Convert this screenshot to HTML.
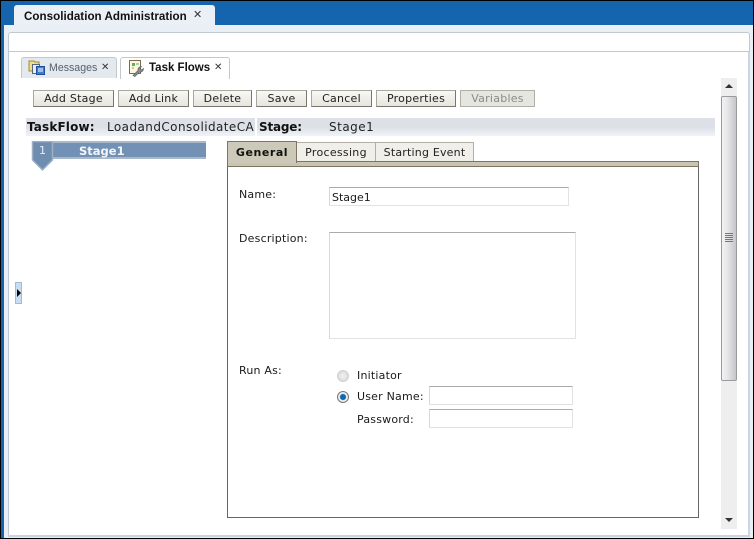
<!DOCTYPE html>
<html><head><meta charset="utf-8">
<style>
html,body{margin:0;padding:0;background:#fff}
#p{position:relative;width:754px;height:539px;overflow:hidden;background:#fff;font-family:"DejaVu Sans","Liberation Sans",sans-serif;font-size:11px;color:#1a1a1a}
#p div,#p svg{position:absolute;box-sizing:border-box}
.t{white-space:nowrap;line-height:14px;letter-spacing:.2px}
.b{height:17px;top:90px;background:linear-gradient(#f8f8f4,#e6e5de);border:1px solid #a8a89e;border-right-color:#77776f;border-bottom-color:#77776f;text-align:center;line-height:15px;white-space:nowrap;color:#222;letter-spacing:.25px}
.i{background:#fff;border:1px solid #e2e2e2;border-top-color:#aaa;border-left-color:#d8d8d8}
</style></head><body>
<div id="p">
<div style="left:0;top:0;width:754px;height:539px;background:#e9eff5"></div>
<div style="left:0;top:1px;width:754px;height:24px;background:#1565ae"></div>
<div style="left:1px;top:1px;width:3px;height:537px;background:#1565ae"></div>
<div style="left:14px;top:5px;width:201px;height:20px;background:#eaf0f5;border-radius:3px 3px 0 0"></div>
<div class="t" style="left:24px;top:10px;font:bold 11.6px/14px 'Liberation Sans',sans-serif;color:#111;letter-spacing:.03px">Consolidation Administration</div>
<div class="t" style="left:193px;top:8px;font-size:11px;color:#333">✕</div>

<div style="left:8px;top:32px;width:742px;height:504px;background:#fff;border:1px solid #c0c8d0;border-radius:3px 3px 0 0"></div>
<div style="left:9px;top:51px;width:740px;height:1px;background:#c0c8d0"></div>
<div style="left:748px;top:52px;width:2px;height:484px;background:#ccd5e6"></div>
<div style="left:8px;top:535px;width:742px;height:2px;background:#c8d4e4"></div>

<!-- inner tabs -->
<div style="left:21px;top:57px;width:96px;height:21px;background:#e4e9ee;border:1px solid #c0c8d0;border-bottom:0;border-radius:3px 3px 0 0"></div>
<svg style="left:28px;top:59px" width="18" height="17" viewBox="0 0 18 17"><path d="M1 2h5l1 1h4v9H1z" fill="#f2dc86" stroke="#9a8a40"/><rect x="4.500" y="5.500" width="7" height="9" fill="#e8edf5" stroke="#55657a"/><rect x="8.500" y="7.500" width="8" height="8" fill="#3f7fd0" stroke="#1f4f9a"/><path d="M10 10h5M10 12h5" stroke="#fff"/></svg>
<div class="t" style="left:49px;top:61px;font:10.6px/14px 'Liberation Sans',sans-serif;color:#555f70;letter-spacing:0">Messages</div>
<div class="t" style="left:101px;top:61px;font-size:10px;color:#333">✕</div>

<div style="left:120px;top:57px;width:110px;height:22px;background:#fff;border:1px solid #c0c8d0;border-bottom:0;border-radius:3px 3px 0 0"></div>
<svg style="left:128px;top:59px" width="17" height="18" viewBox="0 0 17 18"><rect x="1.500" y="1.500" width="11" height="13" fill="#fdf6e0" stroke="#7a6a50"/><path d="M4 4h3v3H4z" fill="#5fb05f"/><path d="M8 5h3" stroke="#5fb05f"/><path d="M4 9h2" stroke="#d08040"/><path d="M5 16.500L10 11.500C9.500 9.500 11 7.500 13.500 7.500L12 9.500 13.500 11 15.500 9.500C15.500 12 13.500 13.500 11.500 13L7 17.500Z" fill="#8a8f98" stroke="#555" stroke-width=".6"/></svg>
<div class="t" style="left:149px;top:61px;font:bold 11.500px/14px 'Liberation Sans',sans-serif;color:#111;letter-spacing:0">Task Flows</div>
<div class="t" style="left:214px;top:61px;font-size:10px;color:#333">✕</div>

<!-- toolbar -->
<div class="b" style="left:33px;width:81px">Add Stage</div>
<div class="b" style="left:118px;width:71px">Add Link</div>
<div class="b" style="left:193px;width:59px">Delete</div>
<div class="b" style="left:256px;width:51px">Save</div>
<div class="b" style="left:311px;width:61px">Cancel</div>
<div class="b" style="left:376px;width:80px">Properties</div>
<div class="b" style="left:460px;width:75px;background:#e6e6e0;border-color:#b0b0a8;color:#8a8a88">Variables</div>

<!-- header bar -->
<div style="left:26px;top:118px;width:229px;height:18px;background:linear-gradient(#dde1e7 0,#dde1e7 50%,#f0f3f6 100%)"></div>
<div style="left:257px;top:118px;width:458px;height:18px;background:linear-gradient(#dde1e7 0,#dde1e7 50%,#f0f3f6 100%)"></div>
<div class="t" style="left:27px;top:120px;font-size:12px;font-weight:bold;color:#111;letter-spacing:.15px">TaskFlow:</div>
<div class="t" style="left:107px;top:120px;font-size:12px;color:#222;letter-spacing:.43px">LoadandConsolidateCA</div>
<div class="t" style="left:259px;top:120px;font-size:12px;font-weight:bold;color:#111;letter-spacing:-.2px">Stage:</div>
<div class="t" style="left:329px;top:120px;font-size:12px;color:#222;letter-spacing:.5px">Stage1</div>

<!-- stage -->
<svg style="left:31px;top:141px" width="176" height="31" viewBox="0 0 176 31"><rect x="20" y="2" width="155" height="14" fill="#7391b4"/><rect x="20" y="0" width="155" height="2" fill="#a9b8ca"/><rect x="20" y="16" width="155" height="2" fill="#a9b8ca"/><path d="M1.500 .5H21.500V19L11.500 29 1.500 19Z" fill="#6f8db0" stroke="#9fb0c4" stroke-width="1.500"/></svg>
<div class="t" style="left:39px;top:144px;font-size:11px;color:#e8eef5">1</div>
<div class="t" style="left:79px;top:144px;font-size:11.500px;font-weight:bold;color:#f2f5f9;letter-spacing:0">Stage1</div>

<!-- tabs -->
<div style="left:296px;top:142px;width:80px;height:20px;background:#f1efe9;border:1px solid #b3b0a3;text-align:center;line-height:19px;color:#222;letter-spacing:.3px">Processing</div>
<div style="left:375px;top:142px;width:99px;height:20px;background:#f1efe9;border:1px solid #b3b0a3;text-align:center;line-height:19px;color:#222;letter-spacing:.2px">Starting Event</div>
<div style="left:227px;top:161px;width:472px;height:357px;background:#fff;border:1px solid #666"></div>
<div style="left:227px;top:161px;width:472px;height:6px;background:#c9c5b2;border:1px solid #7c7660"></div>
<div style="left:227px;top:141px;width:70px;height:22px;background:#cdc9b8;border:1px solid #7c7660;border-bottom:0;text-align:center;line-height:22px;font-weight:bold;color:#111;letter-spacing:.55px">General</div>

<!-- form -->
<div class="t" style="left:239px;top:188px">Name:</div>
<div class="i" style="left:329px;top:187px;width:240px;height:19px"></div>
<div class="t" style="left:332px;top:191px;letter-spacing:0">Stage1</div>
<div class="t" style="left:239px;top:232px">Description:</div>
<div class="i" style="left:329px;top:232px;width:247px;height:107px"></div>
<div class="t" style="left:239px;top:364px">Run As:</div>
<div style="left:337px;top:370px;width:12px;height:12px;border-radius:50%;background:radial-gradient(#f2f2f2,#d4d4d4);border:1px solid #d0d0d0"></div>
<div class="t" style="left:357px;top:369px">Initiator</div>
<div style="left:337px;top:391px;width:12px;height:12px;border-radius:50%;background:radial-gradient(#1068b4 38%,#eee 48%);border:1px solid #777"></div>
<div class="t" style="left:357px;top:390px">User Name:</div>
<div class="i" style="left:429px;top:386px;width:144px;height:19px"></div>
<div class="t" style="left:357px;top:413px">Password:</div>
<div class="i" style="left:429px;top:409px;width:144px;height:19px"></div>

<!-- splitter -->
<div style="left:15px;top:282px;width:7px;height:22px;background:#c8dcf2;border:1px solid #a0bcd8"></div>
<svg style="left:17px;top:289px" width="4" height="8" viewBox="0 0 4 8"><path d="M0 0L4 4 0 8Z" fill="#000"/></svg>

<!-- scrollbar -->
<div style="left:721px;top:78px;width:16px;height:451px;background:#eeeeee"></div>
<svg style="left:725px;top:84px" width="8" height="5" viewBox="0 0 8 5"><path d="M4 0L8 4H0Z" fill="#333"/></svg>
<div style="left:721px;top:96px;width:16px;height:285px;background:linear-gradient(90deg,#f2f2f2,#e8e8ea 35%,#c6c6ca);border:1px solid #9a9a9a;border-radius:2px"></div>
<svg style="left:725px;top:233px" width="8" height="9" viewBox="0 0 8 9"><path d="M0 .5H8M0 2.500H8M0 4.500H8M0 6.500H8M0 8.500H8" stroke="#777"/></svg>
<svg style="left:725px;top:518px" width="8" height="5" viewBox="0 0 8 5"><path d="M0 0H8L4 4Z" fill="#333"/></svg>

<!-- outer frame -->
<div style="left:0;top:0;width:754px;height:1px;background:#000"></div>
<div style="left:0;top:538px;width:754px;height:1px;background:#000"></div>
<div style="left:0;top:0;width:1px;height:539px;background:#000"></div>
<div style="left:753px;top:0;width:1px;height:539px;background:#000"></div>
</div>
</body></html>
